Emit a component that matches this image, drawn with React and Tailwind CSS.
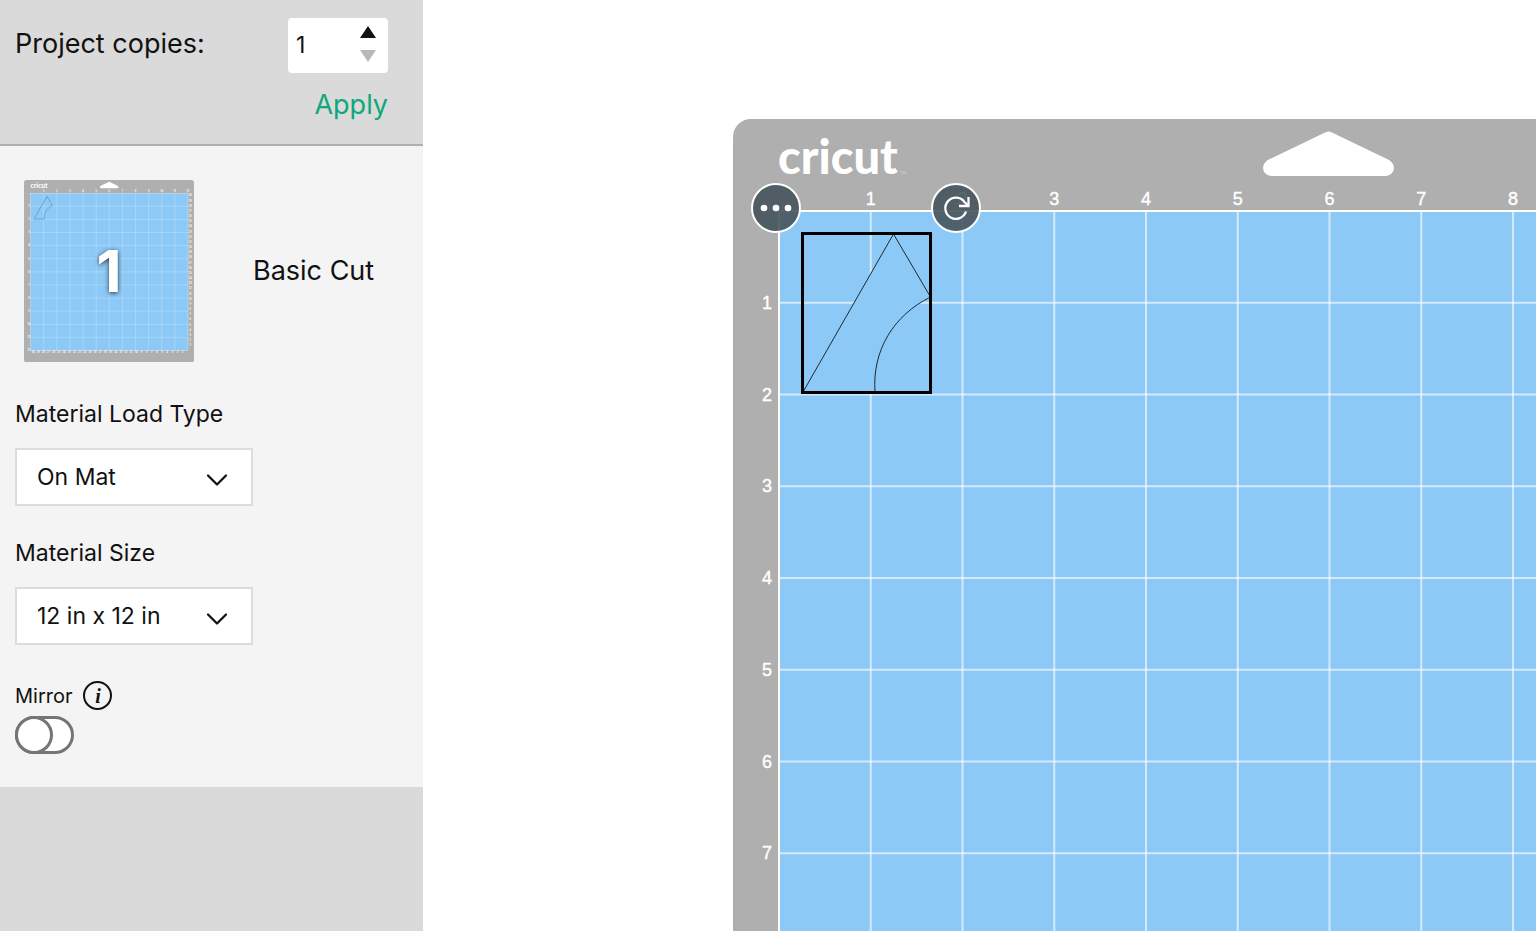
import { useState } from "react";
import { ChevronDown } from "lucide-react";

const SIDE = 1101;
const STEP = SIDE / 12;
const LEFT = 46;
const TOP = 92;
const inches = Array.from({ length: 12 }, (_, i) => i + 1);
const centimetres = Array.from({ length: 30 }, (_, i) => i + 1);

/* Cutting mat: 1 inch is STEP units, origin of the grid is LEFT/TOP. */
function Mat({ thin = false, className }) {
  const cm = SIDE / 30.48;
  return (
    <svg viewBox="0 0 1189 1276" className={className} role="img" aria-label="Cutting mat">
      <rect width="1189" height="1276" rx="18" fill="#afafaf" />
      <text x="45" y="55" fill="#fff" fontFamily="Lato, sans-serif" fontWeight="900" fontSize="47">
        cricut
      </text>
      <text x="167" y="55" fill="#d8d8d8" fontFamily="Liberation Sans, sans-serif" fontSize="4">
        TM
      </text>
      <path
        d="M591 14 Q595.500 11 600 14 L654 40 C665 45 662 57 651 57 H540 C529 57 526 45 537 40 Z"
        fill="#fff"
      />
      <rect x={LEFT} y={TOP} width={SIDE} height={SIDE} fill="#8dc9f6" />
      <g stroke="#fff" strokeWidth={thin ? 5 : 2} strokeOpacity={thin ? 0.3 : 0.62}>
        {inches.slice(0, 11).map((n) => (
          <g key={n}>
            <line x1={LEFT + n * STEP} x2={LEFT + n * STEP} y1={TOP} y2={TOP + SIDE} />
            <line x1={LEFT} x2={LEFT + SIDE} y1={TOP + n * STEP} y2={TOP + n * STEP} />
          </g>
        ))}
      </g>
      <rect x={LEFT} y={TOP} width={SIDE} height={SIDE} fill="none" stroke="#fff" strokeWidth="2" />
      <g
        fill="#fff"
        stroke="#fff"
        strokeWidth="0.4"
        fontFamily="Liberation Sans, sans-serif"
        fontSize="18"
        textAnchor="middle"
      >
        {inches.map((n) => (
          <g key={n}>
            <text x={LEFT + n * STEP} y="86">{n}</text>
            <text x="34" y={TOP + n * STEP + 6}>{n}</text>
          </g>
        ))}
        {centimetres.map((n) => (
          <g key={n}>
            <text x="1163" y={TOP + SIDE - n * cm + 6}>{n}</text>
            <text x={LEFT + SIDE - n * cm} y="1212">{n}</text>
          </g>
        ))}
      </g>
      <path
        d="M70 273 L160.500 115 L197.500 178 C161 196 139 231 142 273 Z"
        fill={thin ? "none" : "#8dc9f6"}
        stroke={thin ? "#5f93b8" : "#1c2a33"}
        strokeWidth={thin ? 5 : 1}
      />
    </svg>
  );
}

function SelectField({ id, label, options }) {
  return (
    <div className="flex flex-col gap-[18px]">
      <label htmlFor={id} className="text-[23px]/8">
        {label}
      </label>
      <div className="relative w-[238px]">
        <select
          id={id}
          className="h-[58px] w-full appearance-none border-2 border-[#dcdcdc] bg-white pr-12 pl-5 text-[23px]"
        >
          {options.map((o) => (
            <option key={o}>{o}</option>
          ))}
        </select>
        <ChevronDown
          className="pointer-events-none absolute top-3.5 right-[18px] size-9"
          strokeWidth={1.5}
          aria-hidden="true"
        />
      </div>
    </div>
  );
}

function Sidebar() {
  const [copies, setCopies] = useState(1);
  return (
    <aside className="w-[423px] shrink-0 bg-[#dadada]">
      <form
        className="border-b-2 border-[#b0b0b0] pt-[18px] pr-[35px] pb-[23px] pl-[15px]"
        onSubmit={(e) => e.preventDefault()}
      >
        <div className="flex items-center justify-between">
          <label htmlFor="copies" className="pb-1 text-[27px]/8">
            Project copies:
          </label>
          <div className="flex h-[55px] w-[100px] items-center justify-between rounded bg-white pr-3">
            <input
              id="copies"
              type="number"
              min="1"
              value={copies}
              onChange={(e) => setCopies(Number(e.target.value))}
              className="w-14 appearance-none bg-transparent pl-2 text-[23px] [appearance:textfield]"
            />
            <div className="flex flex-col gap-3 pb-1">
              <button type="button" className="block" aria-label="More copies" onClick={() => setCopies(copies + 1)}>
                <svg viewBox="0 0 16 12" className="block h-3 w-4">
                  <path d="M8 0 16 12H0Z" fill="#111" />
                </svg>
              </button>
              <button
                type="button"
                className="block"
                aria-label="Fewer copies"
                onClick={() => setCopies(Math.max(1, copies - 1))}
              >
                <svg viewBox="0 0 16 12" className="block h-3 w-4">
                  <path d="M0 0H16L8 12Z" fill="#b8b8b8" />
                </svg>
              </button>
            </div>
          </div>
        </div>
        <div className="flex justify-end pt-4">
          <button type="submit" className="text-[27px]/8 text-[#0ea87a]">
            Apply
          </button>
        </div>
      </form>

      <section className="flex flex-col bg-[#f4f4f4] px-[15px] pt-[34px] pb-[33px]">
        <div className="flex items-center pl-[9px]">
          <div className="grid w-[170px] shrink-0 place-items-center">
            <Mat thin className="col-start-1 row-start-1 h-auto w-full" />
            <span className="col-start-1 row-start-1 text-[58px]/none font-bold text-white [text-shadow:0_1px_5px_#000b]">
              1
            </span>
          </div>
          <h2 className="pl-[59px] text-[27px]/8">Basic Cut</h2>
        </div>
        <div className="flex flex-col gap-[31px] pt-9">
          <SelectField id="load" label="Material Load Type" options={["On Mat", "Without Mat"]} />
          <SelectField id="size" label="Material Size" options={["12 in x 12 in", "12 in x 24 in"]} />
        </div>
        <div className="flex items-center gap-[11px] pt-9">
          <label htmlFor="mirror" className="text-xl">
            Mirror
          </label>
          <button
            type="button"
            aria-label="About mirroring"
            className="flex size-[29px] items-center justify-center rounded-full border-2 border-[#111] font-['Liberation_Serif',serif] text-xl/none font-bold italic"
          >
            i
          </button>
        </div>
        <label
          htmlFor="mirror"
          className="mt-1.5 flex h-[38px] w-[59px] rounded-full border-3 border-[#757575] bg-white"
        >
          <input id="mirror" type="checkbox" role="switch" aria-label="Mirror" className="peer sr-only" />
          <span className="-m-[3px] size-[38px] rounded-full border-3 border-[#757575] bg-white peer-checked:translate-x-[21px]" />
        </label>
      </section>
    </aside>
  );
}

const handle =
  "absolute flex size-[50px] items-center justify-center rounded-full border-2 border-white bg-[#46545d]/90 text-white";

export default function App() {
  return (
    <div className="flex h-screen overflow-hidden bg-white font-[Inter,sans-serif] text-[#111]">
      <Sidebar />
      <main className="min-w-0 flex-1 overflow-hidden pt-[119px] pl-[310px]">
        <div className="relative w-[1189px]">
          <Mat className="block h-auto w-full" />
          <div className="absolute top-[113px] left-[68px] h-[162px] w-[131px] border-3 border-black" />
          <button type="button" aria-label="More options" className={`${handle} top-16 left-[18px]`}>
            <svg viewBox="0 0 32 8" className="h-2 w-8" fill="currentColor">
              <circle cx="4" cy="4" r="3.300" />
              <circle cx="16" cy="4" r="3.300" />
              <circle cx="28" cy="4" r="3.300" />
            </svg>
          </button>
          <button type="button" aria-label="Rotate" className={`${handle} top-16 left-[198px]`}>
            <svg viewBox="0 0 28 28" className="size-7" fill="none" stroke="currentColor" strokeWidth="2.300">
              <path d="M24 17.500A10.600 10.600 0 1 1 22.500 8L26 11.500" />
              <path d="M26.500 3V12H17" />
            </svg>
          </button>
        </div>
      </main>
    </div>
  );
}
